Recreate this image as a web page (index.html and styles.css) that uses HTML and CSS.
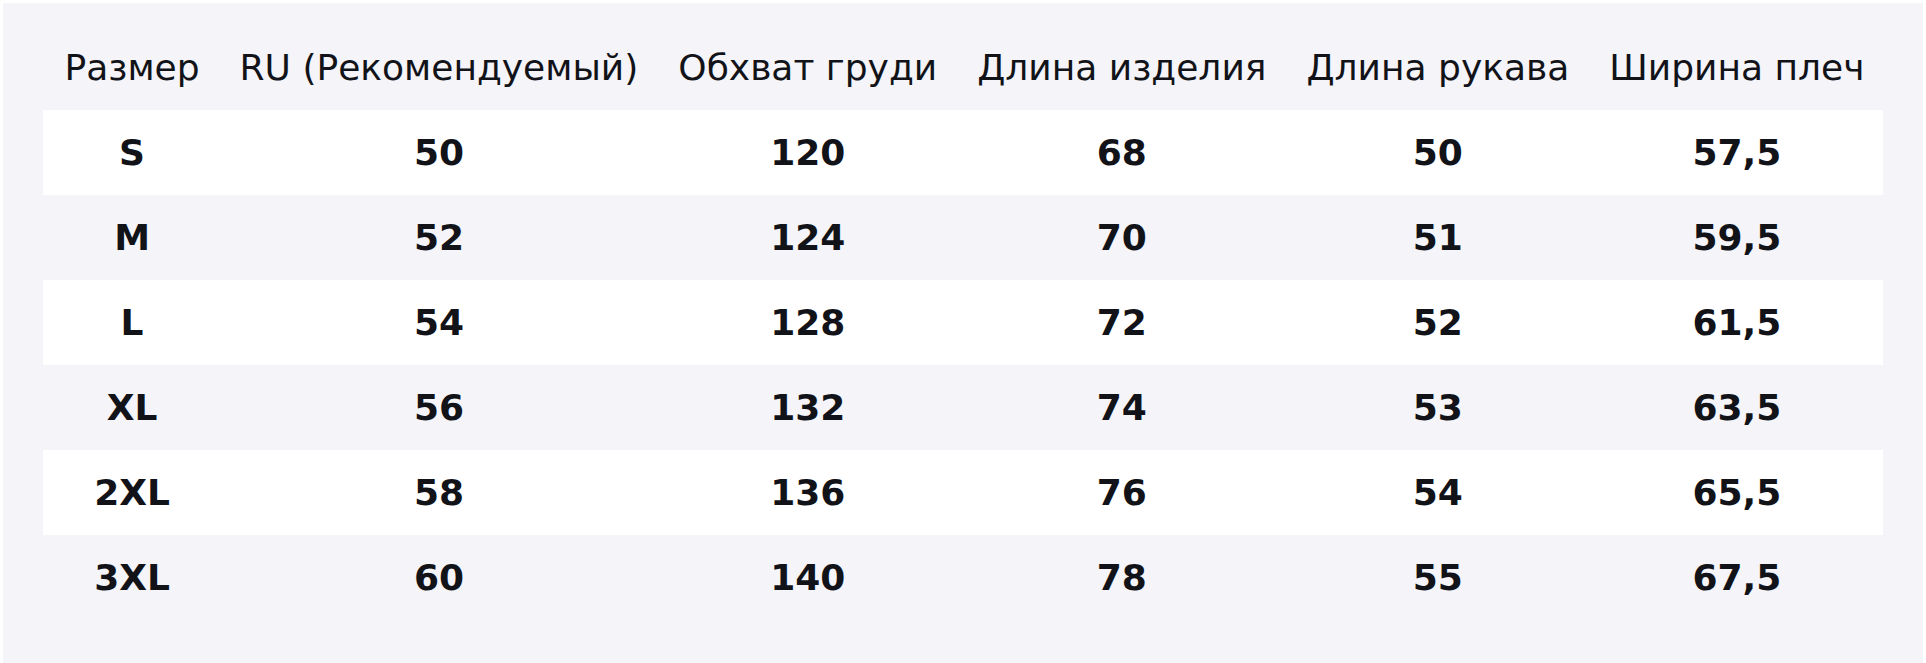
FILE: index.html
```html
<!DOCTYPE html>
<html lang="ru">
<head>
<meta charset="utf-8">
<title>Таблица размеров</title>
<link rel="stylesheet" href="styles.css">
</head>
<body>
<div class="sizes">
  <table class="size-table">
    <thead>
      <tr>
        <th>Размер</th>
        <th>RU (Рекомендуемый)</th>
        <th>Обхват груди</th>
        <th>Длина изделия</th>
        <th>Длина рукава</th>
        <th>Ширина плеч</th>
      </tr>
    </thead>
    <tbody>
      <tr><td>S</td><td>50</td><td>120</td><td>68</td><td>50</td><td>57,5</td></tr>
      <tr><td>M</td><td>52</td><td>124</td><td>70</td><td>51</td><td>59,5</td></tr>
      <tr><td>L</td><td>54</td><td>128</td><td>72</td><td>52</td><td>61,5</td></tr>
      <tr><td>XL</td><td>56</td><td>132</td><td>74</td><td>53</td><td>63,5</td></tr>
      <tr><td>2XL</td><td>58</td><td>136</td><td>76</td><td>54</td><td>65,5</td></tr>
      <tr><td>3XL</td><td>60</td><td>140</td><td>78</td><td>55</td><td>67,5</td></tr>
    </tbody>
  </table>
</div>
</body>
</html>
```

FILE: styles.css
```css
html, body {
  margin: 0;
  padding: 0;
  background: #ffffff;
}

body {
  padding: 3px 0 0 3px;
  font-family: "DejaVu Sans", Verdana, sans-serif;
  color: #121318;
}

.sizes {
  width: 1920px;
  box-sizing: border-box;
  height: 660px;
  background: #f4f4f9;
  padding: 22px 40px 40px;
}

.size-table {
  width: 100%;
  border-collapse: collapse;
  border-spacing: 0;
}

.size-table th,
.size-table td {
  font-size: 36px;
  line-height: 42px;
  padding: 21.5px 18.5px 21.5px 21.5px;
  text-align: center;
  white-space: nowrap;
}

.size-table th {
  font-weight: normal;
}

.size-table td {
  font-weight: bold;
}

.size-table tbody tr:nth-child(odd) {
  background: #ffffff;
}
```
